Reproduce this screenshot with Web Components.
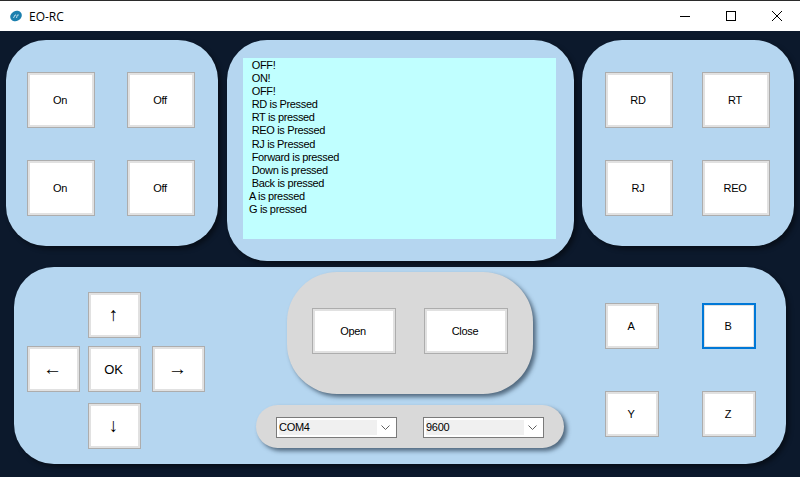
<!DOCTYPE html>
<html>
<head>
<meta charset="utf-8">
<title>EO-RC</title>
<style>
  html, body { margin: 0; height: 100%; background: #0c192c; overflow: hidden; }
</style>
</head>
<body>
<eo-titlebar>EO-RC</eo-titlebar>
<eo-main>
  <eo-panel style="--w:212px;--h:206px;--r:40px" class="tl">
    <eo-grid style="--pad:32px 0 0 21px;--cols:68px 68px;--cgap:32px;--rgap:32px">
      <eo-btn style="--w:68px;--h:56px">On</eo-btn>
      <eo-btn style="--w:68px;--h:56px">Off</eo-btn>
      <eo-btn style="--w:68px;--h:56px">On</eo-btn>
      <eo-btn style="--w:68px;--h:56px">Off</eo-btn>
    </eo-grid>
  </eo-panel>
  <eo-panel style="--w:347px;--h:221px;--r:40px;--ml:9px">
    <eo-log> OFF!
 ON!
 OFF!
 RD is Pressed
 RT is pressed
 REO is Pressed
 RJ is Pressed
 Forward is pressed
 Down is pressed
 Back is pressed
A is pressed
G is pressed</eo-log>
  </eo-panel>
  <eo-panel style="--w:212px;--h:206px;--r:40px;--ml:8px">
    <eo-grid style="--pad:32px 0 0 23px;--cols:68px 68px;--cgap:29px;--rgap:32px">
      <eo-btn style="--w:68px;--h:56px">RD</eo-btn>
      <eo-btn style="--w:68px;--h:56px">RT</eo-btn>
      <eo-btn style="--w:68px;--h:56px">RJ</eo-btn>
      <eo-btn style="--w:68px;--h:56px">REO</eo-btn>
    </eo-grid>
  </eo-panel>
</eo-main>
<eo-bottom>
  <eo-dpad></eo-dpad>
  <eo-center></eo-center>
  <eo-grid style="--pad:36px 0 0 41px;--cols:54px 54px;--cgap:43px;--rgap:42px">
    <eo-btn style="--w:54px;--h:46px">A</eo-btn>
    <eo-btn style="--w:54px;--h:46px" focused>B</eo-btn>
    <eo-btn style="--w:54px;--h:46px">Y</eo-btn>
    <eo-btn style="--w:54px;--h:46px">Z</eo-btn>
  </eo-grid>
</eo-bottom>

<script>
class EoTitlebar extends HTMLElement {
  constructor() {
    super();
    this.attachShadow({ mode: "open" });
    this.shadowRoot.innerHTML = `
      <style>
        :host {
          display: flex;
          align-items: center;
          height: 30px;
          border-top: 1px solid #2b2b2b;
          background: #fff;
          font: 12px "Open Sans", "Noto Sans", sans-serif;
          color: #000;
        }
        .logo { margin-left: 10px; width: 12px; height: 12px; }
        .name { margin-left: 7px; flex: 1; }
        .ctl { width: 46px; height: 30px; display: flex; align-items: center; justify-content: center; }
        svg { display: block; }
      </style>
      <svg class="logo" viewBox="0 0 12 12">
        <ellipse cx="6" cy="6" rx="6" ry="5" fill="#1b7fae" transform="rotate(-30 6 6)"/>
        <path d="M3.5 8l1.5-3h1M6.5 8l.8-3h1.5" stroke="#cfe6f2" stroke-width="0.9" fill="none"/>
      </svg>
      <span class="name"><slot></slot></span>
      <div class="ctl"><svg width="12" height="12"><path d="M1 6.5h10" stroke="#000"/></svg></div>
      <div class="ctl"><svg width="12" height="12"><rect x="1.5" y="1.5" width="9" height="9" fill="none" stroke="#000"/></svg></div>
      <div class="ctl"><svg width="12" height="12"><path d="M1 1l10 10M11 1L1 11" stroke="#000" fill="none"/></svg></div>
    `;
  }
}

class EoMain extends HTMLElement {
  constructor() {
    super();
    this.attachShadow({ mode: "open" });
    this.shadowRoot.innerHTML = `
      <style>
        :host { display: flex; align-items: flex-start; padding: 9px 0 0 6px; }
      </style>
      <slot></slot>
    `;
  }
}

class EoPanel extends HTMLElement {
  constructor() {
    super();
    this.attachShadow({ mode: "open" });
    this.shadowRoot.innerHTML = `
      <style>
        :host {
          display: block;
          flex: none;
          box-sizing: border-box;
          width: var(--w);
          height: var(--h);
          margin-left: var(--ml, 0);
          border-radius: var(--r);
          background: #b5d6f0;
          box-shadow: 3px 3px 5px rgba(0, 0, 0, 0.45);
        }
      </style>
      <slot></slot>
    `;
  }
}

class EoGrid extends HTMLElement {
  constructor() {
    super();
    this.attachShadow({ mode: "open" });
    this.shadowRoot.innerHTML = `
      <style>
        :host {
          display: grid;
          grid-template-columns: var(--cols);
          column-gap: var(--cgap);
          row-gap: var(--rgap);
          padding: var(--pad);
        }
      </style>
      <slot></slot>
    `;
  }
}

class EoBtn extends HTMLElement {
  constructor() {
    super();
    this.attachShadow({ mode: "open" });
    this.shadowRoot.innerHTML = `
      <style>
        :host {
          display: flex;
          align-items: center;
          justify-content: center;
          box-sizing: border-box;
          width: var(--w);
          height: var(--h);
          padding-right: 2px;
          background: #fff;
          border: 1px solid #adadad;
          box-shadow: inset 0 0 0 2px #e1e1e1;
          font: 11px "Liberation Sans", Arial, sans-serif;
          letter-spacing: -0.3px;
          color: #000;
        }
        :host([focused]) {
          border: 2px solid #0078d7;
          box-shadow: inset 0 0 0 1px #e1e1e1;
        }
      </style>
      <slot></slot>
    `;
  }
}

class EoLog extends HTMLElement {
  constructor() {
    super();
    this.attachShadow({ mode: "open" });
    this.shadowRoot.innerHTML = `
      <style>
        :host {
          display: block;
          width: 313px;
          height: 181px;
          margin: 18px 0 0 16px;
          background: #c0ffff;
        }
        .text {
          padding: 1px 0 0 6px;
          font: 11px/13.1px "Liberation Sans", Arial, sans-serif;
          letter-spacing: -0.35px;
          color: #000;
          white-space: pre;
        }
      </style>
      <div class="text"><slot></slot></div>
    `;
  }
}

class EoCombo extends HTMLElement {
  constructor() {
    super();
    this.attachShadow({ mode: "open" });
    this.shadowRoot.innerHTML = `
      <style>
        :host {
          display: flex;
          align-items: center;
          box-sizing: border-box;
          width: 121px;
          height: 21px;
          padding: 2px;
          background: #fff;
          border: 1px solid #7a7a7a;
          font: 11px "Liberation Sans", Arial, sans-serif;
          letter-spacing: -0.3px;
          color: #000;
        }
        .val { width: 98px; height: 15px; line-height: 14px; background: #f0f0f0; }
        .arrow { flex: 1; display: flex; justify-content: center; }
        svg { display: block; }
      </style>
      <div class="val"><slot></slot></div>
      <div class="arrow"><svg width="9" height="6"><path d="M0.5 0.5L4.5 4.5L8.5 0.5" fill="none" stroke="#606060"/></svg></div>
    `;
  }
}

class EoDpad extends HTMLElement {
  constructor() {
    super();
    this.attachShadow({ mode: "open" });
    const size = "--w:53px;--h:46px";
    this.shadowRoot.innerHTML = `
      <style>
        :host {
          display: grid;
          flex: none;
          grid-template-columns: 53px 8px 53px 11px 53px;
          grid-template-rows: 46px 8px 46px 11px 46px;
          margin: 25px 0 0 13px;
        }
        .up { grid-area: 1 / 3; }
        .left { grid-area: 3 / 1; }
        .ok { grid-area: 3 / 3; }
        .right { grid-area: 3 / 5; }
        .down { grid-area: 5 / 3; }
        .sym { font: 19px/20px "Liberation Sans", Arial, sans-serif; letter-spacing: 0; }
        .label { font-size: 13px; letter-spacing: -0.2px; }
      </style>
      <eo-btn class="up" style="${size}"><span class="sym">↑</span></eo-btn>
      <eo-btn class="left" style="${size}"><span class="sym">←</span></eo-btn>
      <eo-btn class="ok" style="${size}"><span class="label">OK</span></eo-btn>
      <eo-btn class="right" style="${size}"><span class="sym">→</span></eo-btn>
      <eo-btn class="down" style="${size}"><span class="sym">↓</span></eo-btn>
    `;
  }
}

class EoCenter extends HTMLElement {
  constructor() {
    super();
    this.attachShadow({ mode: "open" });
    this.shadowRoot.innerHTML = `
      <style>
        :host {
          display: flex;
          flex: none;
          flex-direction: column;
          align-items: center;
          width: 308px;
          margin: 5px 0 0 51px;
          row-gap: 11px;
        }
        .port {
          display: flex;
          box-sizing: border-box;
          width: 246px;
          height: 122px;
          padding: 36px 0 0 25px;
          column-gap: 28px;
          border-radius: 50px;
          background: #d9d9d9;
          box-shadow: 3px 3px 4px rgba(40, 60, 80, 0.7);
        }
        .serial {
          display: flex;
          box-sizing: border-box;
          width: 308px;
          height: 43px;
          padding: 12px 0 0 20px;
          column-gap: 26px;
          border-radius: 21.5px;
          background: #d9d9d9;
          box-shadow: 3px 3px 4px rgba(40, 60, 80, 0.7);
        }
      </style>
      <div class="port">
        <eo-btn style="--w:84px;--h:46px">Open</eo-btn>
        <eo-btn style="--w:84px;--h:46px">Close</eo-btn>
      </div>
      <div class="serial">
        <eo-combo>COM4</eo-combo>
        <eo-combo>9600</eo-combo>
      </div>
    `;
  }
}

class EoBottom extends HTMLElement {
  constructor() {
    super();
    this.attachShadow({ mode: "open" });
    this.shadowRoot.innerHTML = `
      <style>
        :host {
          display: flex;
          align-items: flex-start;
          box-sizing: border-box;
          width: 772px;
          height: 197px;
          margin: 6px 0 0 14px;
          border-radius: 40px;
          background: #b5d6f0;
          box-shadow: 3px 3px 5px rgba(0, 0, 0, 0.45);
        }
      </style>
      <slot></slot>
    `;
  }
}

customElements.define("eo-titlebar", EoTitlebar);
customElements.define("eo-main", EoMain);
customElements.define("eo-panel", EoPanel);
customElements.define("eo-grid", EoGrid);
customElements.define("eo-btn", EoBtn);
customElements.define("eo-log", EoLog);
customElements.define("eo-combo", EoCombo);
customElements.define("eo-dpad", EoDpad);
customElements.define("eo-center", EoCenter);
customElements.define("eo-bottom", EoBottom);
</script>
</body>
</html>
